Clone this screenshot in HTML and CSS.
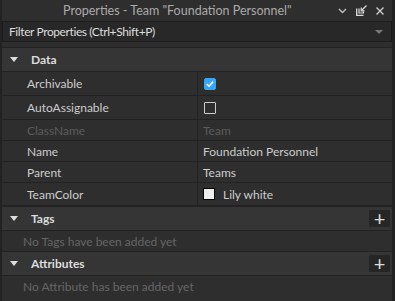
FILE: index.html
```html
<!DOCTYPE html>
<html lang="en">

<head>
    <meta charset="UTF-8">
    <meta name="viewport" content="width=device-width, initial-scale=1.0">
    <title>Properties</title>
    <link rel="stylesheet" href="styles.css">
</head>

<body>
    <div class="panel">
        <div class="titlebar">
            <span class="title">Properties - Team "Foundation Personnel"</span>
            <div class="title-icons">
                <svg width="9" height="6" viewBox="0 0 9 6"><path d="M1 1 L4.5 4.5 L8 1" fill="none" stroke="#bbb" stroke-width="1.5"/></svg>
                <svg width="11" height="11" viewBox="0 0 11 11">
                    <path d="M0.7 3.5 V10.3 H7.5" fill="none" stroke="#ddd" stroke-width="1.3"/>
                    <path d="M3 3.5 V8 H7.5 V6.5" fill="none" stroke="#ddd" stroke-width="1.2"/>
                    <path d="M10.5 0.5 L5.5 5.5" stroke="#ddd" stroke-width="1.3"/>
                    <path d="M5.2 2.5 V5.8 H8.5" fill="none" stroke="#ddd" stroke-width="1.2"/>
                </svg>
                <svg width="8" height="8" viewBox="0 0 8 8"><path d="M0.5 0.5 L7.5 7.5 M7.5 0.5 L0.5 7.5" stroke="#ccc" stroke-width="1.4"/></svg>
            </div>
        </div>

        <div class="filter">
            <span class="filter-text">Filter Properties (Ctrl+Shift+P)</span>
            <span class="filter-arrow"></span>
        </div>

        <div class="spacer"></div>

        <div class="section-header">
            <span class="caret"></span>
            <span>Data</span>
        </div>
        <div class="prop-row tall">
            <div class="prop-name">Archivable</div>
            <div class="prop-value"><span class="checkbox checked">
                <svg width="10" height="10" viewBox="0 0 10 10"><path d="M1.8 5 L4 7.2 L8.2 2.6" fill="none" stroke="#fff" stroke-width="1.6"/></svg>
            </span></div>
        </div>
        <div class="prop-row tall">
            <div class="prop-name">AutoAssignable</div>
            <div class="prop-value"><span class="checkbox"></span></div>
        </div>
        <div class="prop-row disabled">
            <div class="prop-name">ClassName</div>
            <div class="prop-value">Team</div>
        </div>
        <div class="prop-row">
            <div class="prop-name">Name</div>
            <div class="prop-value">Foundation Personnel</div>
        </div>
        <div class="prop-row">
            <div class="prop-name">Parent</div>
            <div class="prop-value">Teams</div>
        </div>
        <div class="prop-row last">
            <div class="prop-name">TeamColor</div>
            <div class="prop-value"><span class="swatch"></span>Lily white</div>
        </div>

        <div class="section-header">
            <span class="caret"></span>
            <span>Tags</span>
            <span class="add-btn">+</span>
        </div>
        <div class="empty-row">No Tags have been added yet</div>

        <div class="section-header">
            <span class="caret"></span>
            <span>Attributes</span>
            <span class="add-btn">+</span>
        </div>
        <div class="empty-row">No Attribute has been added yet</div>
    </div>
</body>

</html>
```

FILE: styles.css
```css
body {
    margin: 0;
    background-color: #2e2e2e;
    font-family: "Lato", "Noto Sans", sans-serif;
    font-size: 12px;
    color: #cccccc;
}

.panel {
    width: 390px;
    height: 301px;
    border-left: 2px solid #222222;
    border-right: 3px solid #222222;
    background-color: #2e2e2e;
    overflow: hidden;
}

.titlebar {
    height: 21px;
    display: flex;
    align-items: center;
    background-color: #2e2e2e;
}

.title {
    flex: 1;
    padding-left: 61px;
    color: #aaaaaa;
    font-size: 12.5px;
}

.title-icons {
    display: flex;
    align-items: center;
    gap: 9px;
    padding-right: 8px;
}

.filter {
    height: 19px;
    display: flex;
    align-items: center;
    justify-content: space-between;
    padding: 0 6px;
    background-color: #282828;
    border: 1px solid #1c1c1c;
    color: #dddddd;
}

.filter-text {
    font-size: 12px;
    letter-spacing: -0.4px;
}

.filter-arrow {
    width: 0;
    height: 0;
    border-left: 4px solid transparent;
    border-right: 4px solid transparent;
    border-top: 4px solid #777777;
    margin-right: 2px;
}

.spacer {
    height: 5px;
}

.section-header {
    height: 23px;
    display: flex;
    align-items: center;
    background-color: #353535;
    border-top: 1px solid #222222;
    border-bottom: 1px solid #222222;
    font-weight: bold;
    color: #dddddd;
}

.caret {
    width: 0;
    height: 0;
    border-left: 4px solid transparent;
    border-right: 4px solid transparent;
    border-top: 5px solid #dddddd;
    margin: 0 13px 0 8px;
}

.add-btn {
    margin-left: auto;
    margin-right: 2px;
    width: 21px;
    height: 17px;
    background-color: #262626;
    color: #dddddd;
    font-size: 20px;
    font-weight: normal;
    line-height: 16px;
    text-align: center;
}

.prop-row {
    display: grid;
    grid-template-columns: 195px 1fr;
    height: 20px;
    border-bottom: 1px solid #222222;
}

.prop-row.tall {
    height: 23px;
}

.prop-row.last {
    height: 22px;
}

.prop-name {
    display: flex;
    align-items: center;
    padding-left: 25px;
}

.prop-value {
    display: flex;
    align-items: center;
    padding-left: 5px;
    border-left: 1px solid #222222;
}

.disabled {
    color: #5c5c5c;
}

.checkbox {
    width: 10px;
    height: 10px;
    border: 1px solid #cccccc;
    border-radius: 1px;
    display: flex;
    align-items: center;
    justify-content: center;
    margin-left: 1px;
}

.checkbox.checked {
    background-color: #35a7f5;
    border-color: #35a7f5;
    border-radius: 2px;
}

.swatch {
    width: 10px;
    height: 10px;
    border: 1px solid #000000;
    background-color: #eeeeee;
    margin-right: 8px;
}

.empty-row {
    height: 20px;
    display: flex;
    align-items: center;
    padding-left: 21px;
    color: #666666;
}
```
